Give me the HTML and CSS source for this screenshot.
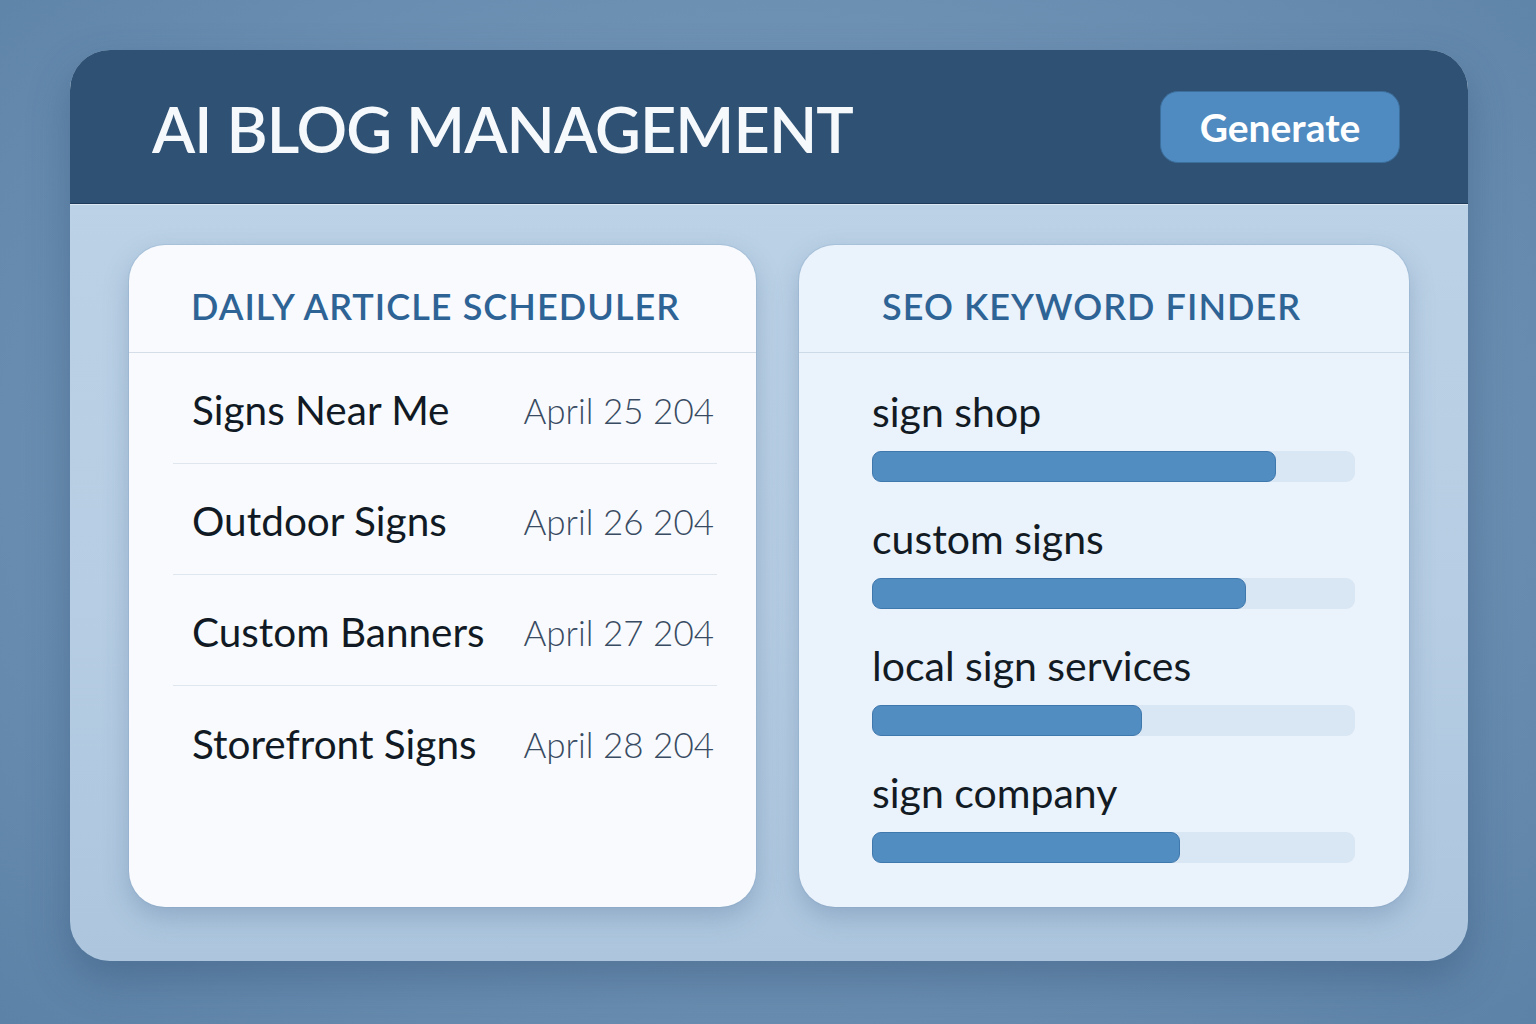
FILE: index.html
```html
<!DOCTYPE html>
<html lang="en">
<head>
<meta charset="utf-8">
<title>AI Blog Management</title>
<link rel="stylesheet" href="styles.css">
</head>
<body>
<main class="panel">
  <header class="topbar">
    <h1 class="title">AI BLOG MANAGEMENT</h1>
    <button class="btn">Generate</button>
  </header>
  <section class="content">
    <div class="card card-left">
      <h2 class="card-title">DAILY ARTICLE SCHEDULER</h2>
      <ul class="rows">
        <li class="row"><span class="row-name">Signs Near Me</span><span class="row-date">April 25 204</span></li>
        <li class="row"><span class="row-name">Outdoor Signs</span><span class="row-date">April 26 204</span></li>
        <li class="row"><span class="row-name">Custom Banners</span><span class="row-date">April 27 204</span></li>
        <li class="row"><span class="row-name">Storefront Signs</span><span class="row-date">April 28 204</span></li>
      </ul>
    </div>
    <div class="card card-right">
      <h2 class="card-title card-title-right">SEO KEYWORD FINDER</h2>
      <ul class="keywords">
        <li class="kw"><span class="kw-label">sign shop</span><div class="track"><div class="fill" style="width:83.6%"></div></div></li>
        <li class="kw"><span class="kw-label">custom signs</span><div class="track"><div class="fill" style="width:77.4%"></div></div></li>
        <li class="kw"><span class="kw-label">local sign services</span><div class="track"><div class="fill" style="width:55.9%"></div></div></li>
        <li class="kw"><span class="kw-label">sign company</span><div class="track"><div class="fill" style="width:63.8%"></div></div></li>
      </ul>
    </div>
  </section>
</main>
</body>
</html>
```

FILE: styles.css
```css
* { box-sizing: border-box; }
html, body { margin: 0; padding: 0; }
body {
  width: 1536px;
  height: 1024px;
  overflow: hidden;
  background: radial-gradient(ellipse at 50% 45%, #7a9cbb 0%, #6d91b3 55%, #5c82a7 100%);
  font-family: "Lato", "Inter", sans-serif;
  padding: 50px 0 0 70px;
}
.panel {
  width: 1398px;
  height: 911px;
  border-radius: 40px;
  overflow: hidden;
  background: linear-gradient(180deg, #bed4e7 0%, #b6cde3 60%, #adc6de 100%);
  box-shadow: 0 18px 40px rgba(40, 70, 105, 0.35);
  display: flex;
  flex-direction: column;
}
.topbar {
  height: 154px;
  flex: none;
  background: #2f5274;
  border-bottom: 1px solid #1e3b5a;
  box-shadow: 0 1px 0 #dbe8f3;
  display: flex;
  align-items: center;
  justify-content: space-between;
  padding: 0 68px 0 82px;
}
.title {
  margin: 0;
  color: #f6f9fc;
  font-family: "Lato", sans-serif;
  font-weight: 600;
  font-size: 63px;
  letter-spacing: -0.9px;
  line-height: 1;
  padding-top: 4px;
}
.btn {
  width: 240px;
  height: 72px;
  border-radius: 18px;
  background: #4f8bc0;
  border: 1px solid #3d6f9d;
  color: #ffffff;
  font-family: "Lato", sans-serif;
  font-weight: 700;
  font-size: 39px;
  padding: 0;
  margin-top: 0;
}
.content {
  flex: 1;
  display: flex;
  gap: 43px;
  padding: 41px 59px 0 59px;
}
.card {
  height: 662px;
  border-radius: 36px;
  box-shadow: 0 10px 26px rgba(60, 95, 135, 0.28), 0 0 0 1px rgba(150, 180, 210, 0.35);
}
.card-left { width: 627px; background: #f8fafd; }
.card-right { width: 610px; background: #eaf2fb; }
.card-title {
  margin: 0;
  height: 108px;
  padding: 39px 0 0 62px;
  line-height: 44px;
  font-size: 36px;
  font-weight: 600;
  color: #2e6396;
  letter-spacing: 1.05px;
  border-bottom: 1px solid #d5dee8;
}
.card-title-right { padding-left: 83px; border-bottom-color: #ccd9e6; }
.rows {
  list-style: none;
  margin: 0 39px 0 44px;
  padding: 0;
}
.row {
  height: 111px;
  display: flex;
  align-items: center;
  justify-content: space-between;
  padding: 4px 3px 0 19px;
  border-bottom: 1px solid #dfe6ee;
  line-height: 100px;
}
.row:last-child { border-bottom: none; }
.row-name {
  font-size: 40.5px;
  color: #111a24;
  font-weight: 400;
}
.row-date {
  font-size: 35px;
  color: #394b62;
  font-weight: 300;
}
.keywords {
  list-style: none;
  margin: 0;
  padding: 36px 54px 0 73px;
}
.kw { margin-bottom: 34px; }
.kw-label {
  display: block;
  font-size: 41px;
  line-height: 46px;
  color: #121a23;
  margin-bottom: 16px;
}
.track {
  height: 31px;
  border-radius: 9px;
  background: #d9e6f3;
}
.fill {
  height: 100%;
  border-radius: 9px;
  background: #528dc1;
  border: 1px solid #3f78ad;
}
```
